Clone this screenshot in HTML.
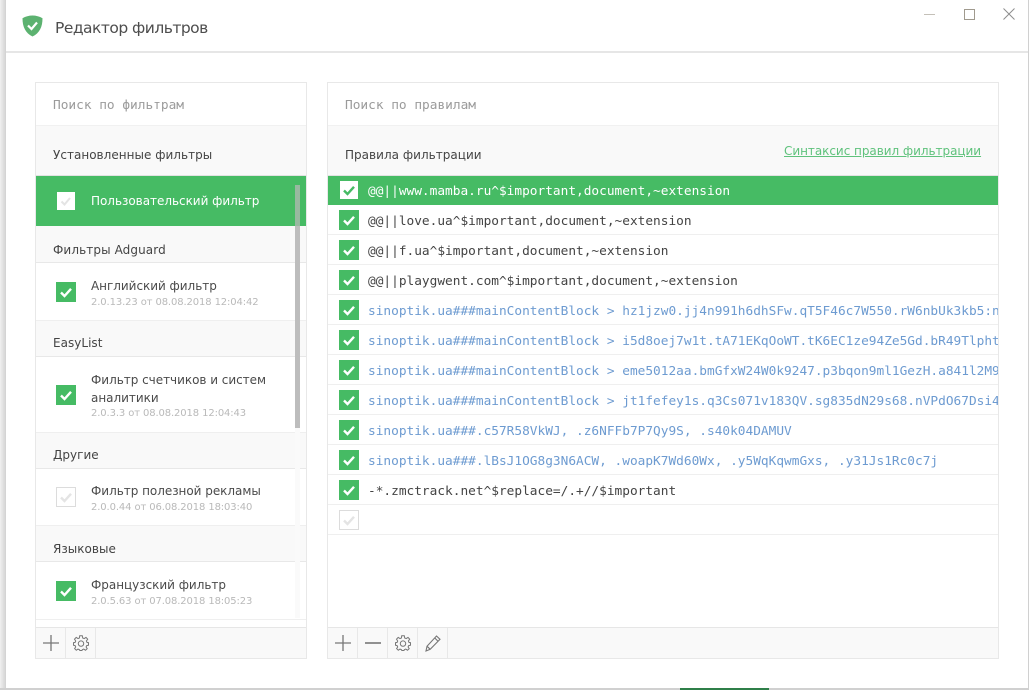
<!DOCTYPE html>
<html><head><meta charset="utf-8"><style>
html,body{margin:0;padding:0;background:#fff}
#w{position:relative;width:1029px;height:690px;overflow:hidden;background:#fff;font-family:"DejaVu Sans","Liberation Sans",sans-serif;color:#4a4a4a}
#w div,#w svg,#w a{position:absolute}
.t{white-space:nowrap;line-height:18px;font-size:12px;letter-spacing:-.03px}
.s{white-space:nowrap;line-height:14px;font-size:10px;color:#b9b9b9;letter-spacing:-.12px}
.h{white-space:nowrap;line-height:18px;font-size:12px;color:#444;letter-spacing:.02px}
.m{white-space:nowrap;font-family:"DejaVu Sans Mono","Liberation Mono",monospace;font-size:12.8px;line-height:18px;color:#444;left:40px}
.b{color:#6d9bd1}
.ck{width:20px;height:20px}
</style></head><body><div id="w">
<div style="left:0;top:0;width:6px;height:690px;background:linear-gradient(90deg,#f0f0f0,#d2d2d2)"></div>
<div style="left:0;top:688px;width:1029px;height:2px;background:#d0d0d0"></div>
<div style="left:1028px;top:0;width:1px;height:690px;background:#d0d0d0"></div>
<div style="left:680px;top:688px;width:89px;height:2px;background:#2f7f49"></div>
<div style="left:6px;top:51px;width:1022px;height:2px;background:#e6e6e6"></div>
<svg style="left:22px;top:15px" width="21" height="22" viewBox="0 0 21 22"><path d="M10.500 .5C7 .5 3.500 1.500 .5 3.200C.5 12 3.500 18 10.500 21.500C17.500 18 20.500 12 20.500 3.200C17.500 1.500 14 .5 10.500 .5Z" fill="#5cb270"/><path d="M6 10.500L9.500 14L15 7.500" fill="none" stroke="#fff" stroke-width="2.200"/></svg>
<div style="left:55px;top:17px;font-size:15.5px;line-height:22px;color:#4d4d4d;white-space:nowrap;letter-spacing:-.52px">Редактор фильтров</div>
<div style="left:924px;top:14px;width:11px;height:1px;background:#c4c0b8"></div>
<div style="left:964px;top:9px;width:9px;height:9px;border:1px solid #a09a8e"></div>
<svg style="left:1003px;top:8px" width="12" height="12" viewBox="0 0 12 12"><path d="M.5 .5L11.500 11.500M11.500 .5L.5 11.500" stroke="#8d8d8d" stroke-width="1" fill="none"/></svg>

<!-- LEFT PANEL -->
<div style="left:35px;top:82px;width:270px;height:575px;border:1px solid #e8e8e8;background:#fff;overflow:hidden">
  <div style="left:0;top:42px;width:270px;height:49px;background:#f9f9f9;border-top:1px solid #f1f1f1;border-bottom:1px solid #e2e2e2"></div>
  <div style="left:0;top:93px;width:270px;height:50px;background:#46bb64"></div>
  <div style="left:0;top:143px;width:270px;height:36px;background:#f9f9f9;border-bottom:1px solid #e8e8e8"></div>
  <div style="left:0;top:237px;width:270px;height:35px;background:#f9f9f9;border-top:1px solid #efefef;border-bottom:1px solid #e8e8e8"></div>
  <div style="left:0;top:349px;width:270px;height:35px;background:#f9f9f9;border-top:1px solid #efefef;border-bottom:1px solid #e8e8e8"></div>
  <div style="left:0;top:442px;width:270px;height:35px;background:#f9f9f9;border-top:1px solid #efefef;border-bottom:1px solid #e8e8e8"></div>
  <div style="left:0;top:536px;width:270px;height:1px;background:#efefef"></div>
  <div style="left:259px;top:102px;width:5px;height:243px;background:#bdbdbd"></div>
  <div style="left:259px;top:345px;width:5px;height:190px;background:#fafafa"></div>
  <div style="left:259px;top:102px;width:5px;height:41px;background:#98b9a0"></div>
</div>
<div style="left:53px;top:97px;font-family:'DejaVu Sans Mono','Liberation Mono',monospace;font-size:12.800px;line-height:18px;color:#9b9b9b;white-space:nowrap">Поиск по фильтрам</div>
<div class="h" style="left:53px;top:146px">Установленные фильтры</div>
<div class="t" style="left:91px;top:192px;color:#fff">Пользовательский фильтр</div>
<div class="ck" style="left:57px;top:192px;width:18px;height:18px;background:#fff"></div>
<svg style="left:57px;top:192px" width="18" height="18" viewBox="0 0 18 18"><path d="M4.500 9.500L7.500 12.500L13 6" fill="none" stroke="#e4e4e4" stroke-width="2"/></svg>
<div class="h" style="left:53px;top:241px;letter-spacing:.1px">Фильтры Adguard</div>
<div class="t" style="left:91px;top:277px">Английский фильтр</div>
<div class="s" style="left:91px;top:296px">2.0.13.23 от 08.08.2018 12:04:42</div>
<div class="h" style="left:53px;top:334px">EasyList</div>
<div class="t" style="left:91px;top:371px">Фильтр счетчиков и систем</div>
<div class="t" style="left:91px;top:389px">аналитики</div>
<div class="s" style="left:91px;top:407px">2.0.3.3 от 08.08.2018 12:04:43</div>
<div class="h" style="left:53px;top:446px">Другие</div>
<div class="t" style="left:91px;top:482px">Фильтр полезной рекламы</div>
<div class="s" style="left:91px;top:501px">2.0.0.44 от 06.08.2018 18:03:40</div>
<div class="h" style="left:53px;top:540px">Языковые</div>
<div class="t" style="left:91px;top:576px">Французский фильтр</div>
<div class="s" style="left:91px;top:595px">2.0.5.63 от 07.08.2018 18:05:23</div>

<svg class="ck" style="left:56px;top:282px" viewBox="0 0 20 20"><rect width="20" height="20" fill="#46bb64"/><path d="M5 10.500L8.500 14L15 6.800" fill="none" stroke="#fff" stroke-width="2.400"/></svg>
<svg class="ck" style="left:56px;top:385px" viewBox="0 0 20 20"><rect width="20" height="20" fill="#46bb64"/><path d="M5 10.500L8.500 14L15 6.800" fill="none" stroke="#fff" stroke-width="2.400"/></svg>
<svg class="ck" style="left:56px;top:487px" viewBox="0 0 20 20"><rect x=".5" y=".5" width="19" height="19" fill="#fff" stroke="#dcdcdc"/><path d="M5 10.500L8.500 14L15 6.800" fill="none" stroke="#e4e4e4" stroke-width="2.400"/></svg>
<svg class="ck" style="left:56px;top:581px" viewBox="0 0 20 20"><rect width="20" height="20" fill="#46bb64"/><path d="M5 10.500L8.500 14L15 6.800" fill="none" stroke="#fff" stroke-width="2.400"/></svg>

<div style="left:36px;top:627px;width:270px;height:31px;background:#f9f9f9;border-top:1px solid #e6e6e6;box-sizing:border-box"></div>
<div style="left:65px;top:628px;width:1px;height:30px;background:#e8e8e8"></div>
<div style="left:95px;top:628px;width:1px;height:30px;background:#e8e8e8"></div>
<svg style="left:43px;top:635px" width="16" height="16" viewBox="0 0 16 16"><path d="M8 0V16M0 8H16" stroke="#777" stroke-width="1.300"/></svg>
<svg style="left:73px;top:635px" width="16" height="16" viewBox="0 0 16 16"><path d="M6.700 .8H9.300L9.700 3L11.200 3.600L13 2.400L14.700 4.200L13.400 6L14 7.400L15.500 7.700V10.200L13.700 10.600L13.100 12L14.200 13.700L12.500 15.200L10.700 14.100L9.300 14.700L9 15.500H6.800L6.400 14.600L5 14.100L3.300 15.200L1.600 13.600L2.700 12L2.100 10.600L.5 10.200V7.700L2.100 7.400L2.700 6L1.500 4.200L3.200 2.400L5 3.600L6.400 3Z" fill="none" stroke="#777" stroke-width="1"/><circle cx="8" cy="8.600" r="2.700" fill="none" stroke="#777" stroke-width="1"/></svg>

<!-- RIGHT PANEL -->
<div style="left:327px;top:82px;width:670px;height:575px;border:1px solid #e8e8e8;background:#fff;overflow:hidden">
  <div style="left:0;top:42px;width:670px;height:49px;background:#f9f9f9;border-top:1px solid #f1f1f1;border-bottom:1px solid #e2e2e2"></div>
  <div style="left:0;top:93px;width:670px;height:29px;background:#46bb64"></div>
  <div style="left:0;top:151px;width:670px;height:1px;background:#efefef"></div>
  <div style="left:0;top:181px;width:670px;height:1px;background:#efefef"></div>
  <div style="left:0;top:211px;width:670px;height:1px;background:#efefef"></div>
  <div style="left:0;top:241px;width:670px;height:1px;background:#efefef"></div>
  <div style="left:0;top:271px;width:670px;height:1px;background:#efefef"></div>
  <div style="left:0;top:301px;width:670px;height:1px;background:#efefef"></div>
  <div style="left:0;top:331px;width:670px;height:1px;background:#efefef"></div>
  <div style="left:0;top:361px;width:670px;height:1px;background:#efefef"></div>
  <div style="left:0;top:391px;width:670px;height:1px;background:#efefef"></div>
  <div style="left:0;top:421px;width:670px;height:1px;background:#efefef"></div>
  <div style="left:0;top:451px;width:670px;height:1px;background:#efefef"></div>

  <div class="m" style="top:100px;color:#fff">@@||www.mamba.ru^$important,document,~extension</div>
  <div class="m" style="top:130px">@@||love.ua^$important,document,~extension</div>
  <div class="m" style="top:160px">@@||f.ua^$important,document,~extension</div>
  <div class="m" style="top:190px">@@||playgwent.com^$important,document,~extension</div>
  <div class="m b" style="top:220px">sinoptik.ua###mainContentBlock &gt; hz1jzw0.jj4n991h6dhSFw.qT5F46c7W550.rW6nbUk3kb5:nth</div>
  <div class="m b" style="top:250px">sinoptik.ua###mainContentBlock &gt; i5d8oej7w1t.tA71EKqOoWT.tK6EC1ze94Ze5Gd.bR49Tlphts</div>
  <div class="m b" style="top:280px">sinoptik.ua###mainContentBlock &gt; eme5012aa.bmGfxW24W0k9247.p3bqon9ml1GezH.a841l2M9s</div>
  <div class="m b" style="top:310px">sinoptik.ua###mainContentBlock &gt; jt1fefey1s.q3Cs071v183QV.sg835dN29s68.nVPdO67Dsi4x</div>
  <div class="m b" style="top:340px">sinoptik.ua###.c57R58VkWJ, .z6NFFb7P7Qy9S, .s40k04DAMUV</div>
  <div class="m b" style="top:370px">sinoptik.ua###.lBsJ1OG8g3N6ACW, .woapK7Wd60Wx, .y5WqKqwmGxs, .y31Js1Rc0c7j</div>
  <div class="m" style="top:400px">-*.zmctrack.net^$replace=/.+//$important</div>
</div>
<div style="left:345px;top:97px;font-family:'DejaVu Sans Mono','Liberation Mono',monospace;font-size:12.800px;line-height:18px;color:#9b9b9b;white-space:nowrap">Поиск по правилам</div>
<div class="h" style="left:345px;top:146px">Правила фильтрации</div>
<a style="left:784px;top:143px;font-size:12px;line-height:17px;color:#5fc27c;text-decoration:underline;white-space:nowrap;letter-spacing:-.04px">Синтаксис правил фильтрации</a>

<div style="left:340px;top:181px;width:18px;height:18px;background:#fff"></div>
<svg style="left:340px;top:181px" width="18" height="18" viewBox="0 0 18 18"><path d="M4 9.500L7.500 13L14 5.800" fill="none" stroke="#46bb64" stroke-width="2.400"/></svg>
<svg class="ck" style="left:339px;top:210px" viewBox="0 0 20 20"><rect width="20" height="20" fill="#46bb64"/><path d="M5 10.500L8.500 14L15 6.800" fill="none" stroke="#fff" stroke-width="2.400"/></svg>
<svg class="ck" style="left:339px;top:240px" viewBox="0 0 20 20"><rect width="20" height="20" fill="#46bb64"/><path d="M5 10.500L8.500 14L15 6.800" fill="none" stroke="#fff" stroke-width="2.400"/></svg>
<svg class="ck" style="left:339px;top:270px" viewBox="0 0 20 20"><rect width="20" height="20" fill="#46bb64"/><path d="M5 10.500L8.500 14L15 6.800" fill="none" stroke="#fff" stroke-width="2.400"/></svg>
<svg class="ck" style="left:339px;top:300px" viewBox="0 0 20 20"><rect width="20" height="20" fill="#46bb64"/><path d="M5 10.500L8.500 14L15 6.800" fill="none" stroke="#fff" stroke-width="2.400"/></svg>
<svg class="ck" style="left:339px;top:330px" viewBox="0 0 20 20"><rect width="20" height="20" fill="#46bb64"/><path d="M5 10.500L8.500 14L15 6.800" fill="none" stroke="#fff" stroke-width="2.400"/></svg>
<svg class="ck" style="left:339px;top:360px" viewBox="0 0 20 20"><rect width="20" height="20" fill="#46bb64"/><path d="M5 10.500L8.500 14L15 6.800" fill="none" stroke="#fff" stroke-width="2.400"/></svg>
<svg class="ck" style="left:339px;top:390px" viewBox="0 0 20 20"><rect width="20" height="20" fill="#46bb64"/><path d="M5 10.500L8.500 14L15 6.800" fill="none" stroke="#fff" stroke-width="2.400"/></svg>
<svg class="ck" style="left:339px;top:420px" viewBox="0 0 20 20"><rect width="20" height="20" fill="#46bb64"/><path d="M5 10.500L8.500 14L15 6.800" fill="none" stroke="#fff" stroke-width="2.400"/></svg>
<svg class="ck" style="left:339px;top:450px" viewBox="0 0 20 20"><rect width="20" height="20" fill="#46bb64"/><path d="M5 10.500L8.500 14L15 6.800" fill="none" stroke="#fff" stroke-width="2.400"/></svg>
<svg class="ck" style="left:339px;top:480px" viewBox="0 0 20 20"><rect width="20" height="20" fill="#46bb64"/><path d="M5 10.500L8.500 14L15 6.800" fill="none" stroke="#fff" stroke-width="2.400"/></svg>
<svg class="ck" style="left:339px;top:510px" viewBox="0 0 20 20"><rect x=".5" y=".5" width="19" height="19" fill="#fff" stroke="#dcdcdc"/><path d="M5 10.500L8.500 14L15 6.800" fill="none" stroke="#e4e4e4" stroke-width="2.400"/></svg>

<div style="left:328px;top:627px;width:670px;height:31px;background:#f9f9f9;border-top:1px solid #e6e6e6;box-sizing:border-box"></div>
<div style="left:357px;top:628px;width:1px;height:30px;background:#e8e8e8"></div>
<div style="left:387px;top:628px;width:1px;height:30px;background:#e8e8e8"></div>
<div style="left:417px;top:628px;width:1px;height:30px;background:#e8e8e8"></div>
<div style="left:447px;top:628px;width:1px;height:30px;background:#e8e8e8"></div>
<svg style="left:335px;top:635px" width="16" height="16" viewBox="0 0 16 16"><path d="M8 0V16M0 8H16" stroke="#777" stroke-width="1.300"/></svg>
<svg style="left:365px;top:635px" width="16" height="16" viewBox="0 0 16 16"><path d="M0 8H16" stroke="#777" stroke-width="1.600"/></svg>
<svg style="left:395px;top:635px" width="16" height="16" viewBox="0 0 16 16"><path d="M6.700 .8H9.300L9.700 3L11.200 3.600L13 2.400L14.700 4.200L13.400 6L14 7.400L15.500 7.700V10.200L13.700 10.600L13.100 12L14.200 13.700L12.500 15.200L10.700 14.100L9.300 14.700L9 15.500H6.800L6.400 14.600L5 14.100L3.300 15.200L1.600 13.600L2.700 12L2.100 10.600L.5 10.200V7.700L2.100 7.400L2.700 6L1.500 4.200L3.200 2.400L5 3.600L6.400 3Z" fill="none" stroke="#777" stroke-width="1"/><circle cx="8" cy="8.600" r="2.700" fill="none" stroke="#777" stroke-width="1"/></svg>
<svg style="left:425px;top:635px" width="16" height="17" viewBox="0 0 16 17"><path d="M11.500 1L15 4.300L5.200 14.300L1 16L2 11.200ZM9.800 3L13 6.300M2 11.200L5.200 14.300" fill="none" stroke="#777" stroke-width="1.100"/></svg>
</div></body></html>
